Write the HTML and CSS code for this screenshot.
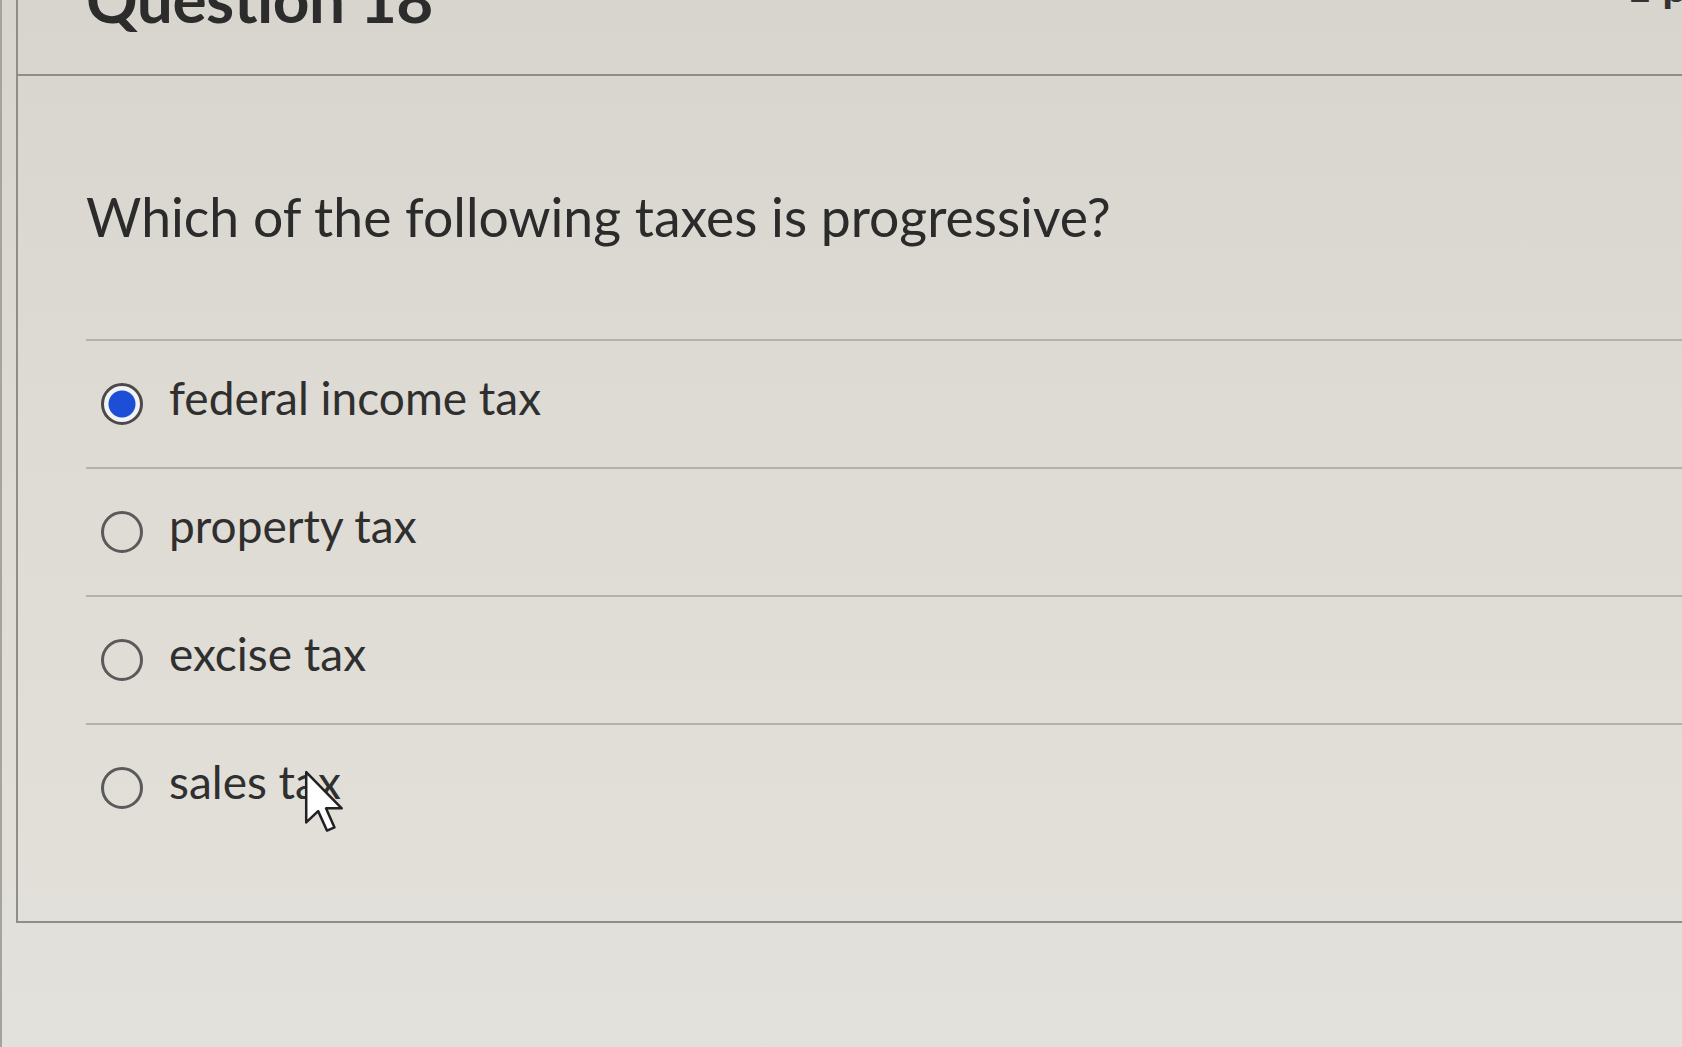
FILE: index.html
```html
<!DOCTYPE html>
<html lang="en">
<head>
<meta charset="utf-8">
<title>Question 18</title>
<link rel="stylesheet" href="styles.css">
</head>
<body>
<div class="card">
  <div class="card-header">
    <h2 class="title">Question 18</h2>
    <span class="points">1 pts</span>
  </div>
  <div class="card-body">
    <p class="question">Which of the following taxes is progressive?</p>
    <ul class="answers">
      <li class="answer">
        <span class="radio selected"></span>
        <span class="label">federal income tax</span>
      </li>
      <li class="answer">
        <span class="radio"></span>
        <span class="label">property tax</span>
      </li>
      <li class="answer">
        <span class="radio"></span>
        <span class="label">excise tax</span>
      </li>
      <li class="answer">
        <span class="radio"></span>
        <span class="label">sales tax</span>
        <svg class="cursor" viewBox="0 0 13 21" width="41" height="66" aria-hidden="true">
          <path d="M1 1 L1 17 L4.8 13.4 L7.6 19.6 L10 18.6 L7.3 12.5 L12.3 12.5 Z" fill="#ffffff" stroke="#222" stroke-width="0.8" stroke-linejoin="round"/>
        </svg>
      </li>
    </ul>
  </div>
</div>
</body>
</html>
```

FILE: styles.css
```css
html, body {
  margin: 0;
  padding: 0;
}

body {
  width: 1682px;
  height: 1047px;
  overflow: hidden;
  box-sizing: border-box;
  border-left: 2px solid #a5a39d;
  background: linear-gradient(180deg, #d8d5ce 0%, #dedbd4 40%, #e3e1db 100%);
  font-family: Lato, "Open Sans", "Liberation Sans", sans-serif;
  color: #2f2f2f;
}

.card {
  margin-left: 14px;
  border-left: 2px solid #8e8d89;
  border-bottom: 2px solid #8e8d89;
}

.card-header {
  height: 74px;
  border-bottom: 2px solid #8e8d89;
  display: flex;
  align-items: flex-start;
  justify-content: space-between;
  padding-left: 68px;
}

.title {
  margin: -33px 0 0 0;
  font-size: 64px;
  line-height: 1;
  font-weight: 700;
  color: #2c2c2c;
  letter-spacing: -0.5px;
}

.points {
  margin-top: -37px;
  margin-right: -44px;
  font-size: 44px;
  line-height: 1;
  font-weight: 700;
  color: #333;
  white-space: nowrap;
  width: 100px;
}

.card-body {
  padding: 0 0 70px 68px;
}

.question {
  margin: 0;
  padding: 108px 0 91px 0;
  font-size: 53.5px;
  line-height: 1.2;
  font-weight: 400;
  color: #2b2b2b;
}

.answers {
  list-style: none;
  margin: 0;
  padding: 0;
}

.answer {
  position: relative;
  height: 126px;
  border-top: 2px solid #b3b1ab;
  display: flex;
  align-items: center;
  padding-left: 15px;
  gap: 26px;
}

.radio {
  flex: none;
  width: 42px;
  height: 42px;
  box-sizing: border-box;
  border-radius: 50%;
  border: 3px solid #5a5a5a;
  background: transparent;
}

.radio.selected {
  border: 3px solid #4a4a4a;
  background: radial-gradient(circle, #1c4fd6 0, #1c4fd6 13px, #f3f3f6 14px, #f3f3f6 100%);
}

.label {
  font-size: 46px;
  line-height: 1;
  padding-bottom: 12px;
  color: #2f2f2f;
}

.cursor {
  position: absolute;
  left: 217px;
  top: 44px;
}
```
